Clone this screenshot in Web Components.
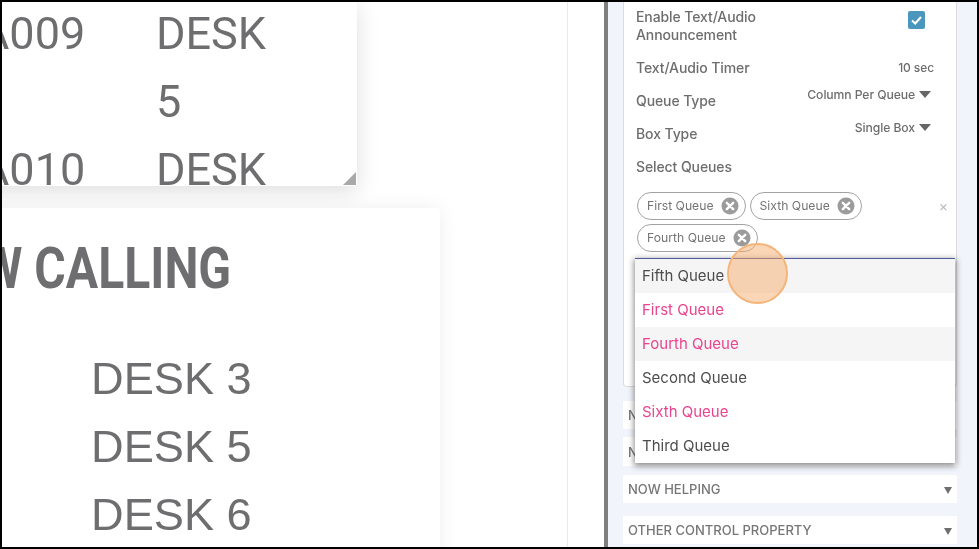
<!DOCTYPE html>
<html lang="en">
<head>
<meta charset="utf-8">
<title>Queue display settings</title>
<style>
    html, body { margin: 0; padding: 0; background: #fff; }
</style>
</head>
<body>
<app-frame>
    <ticket-card slot="canvas"></ticket-card>
    <calling-card slot="canvas"></calling-card>
    <settings-panel slot="side"></settings-panel>
</app-frame>

<script>
class AppFrame extends HTMLElement {
    constructor() {
        super()
        this.attachShadow({ mode: 'open' }).innerHTML = /*html*/ `
            <style>
                :host {
                    display: flex;
                    box-sizing: border-box;
                    width: 979px;
                    height: 549px;
                    border: 2px solid #000;
                    overflow: hidden;
                    background: #fff;
                }
                .work {
                    flex: 1;
                    min-width: 0;
                    padding-right: 36px;
                    filter: blur(0.3px);
                }
                .canvas {
                    position: relative;
                    height: 100%;
                    overflow: hidden;
                    border-right: 1px solid #e9e9e9;
                }
            </style>
            <div class="work"><div class="canvas"><slot name="canvas"></slot></div></div>
            <slot name="side"></slot>
        `
    }
}

class TicketCard extends HTMLElement {
    constructor() {
        super()
        this.attachShadow({ mode: 'open' }).innerHTML = /*html*/ `
            <style>
                :host {
                    position: absolute;
                    left: -60px;
                    top: -2px;
                    box-sizing: border-box;
                    width: 415px;
                    height: 186px;
                    padding-left: 38px;
                    overflow: hidden;
                    background: #fff;
                    box-shadow: 0 6px 22px rgba(0, 0, 0, 0.13);
                    font: 45px/68px Roboto, sans-serif;
                    color: #6e6e70;
                }
                table { border-collapse: collapse; table-layout: fixed; width: 301px; }
                td { padding: 0; vertical-align: top; }
                .num { width: 176px; }
                .grip {
                    position: absolute;
                    right: 1px;
                    bottom: 1px;
                    width: 13px;
                    height: 13px;
                    background: #a9a9a9;
                    clip-path: polygon(100% 0, 100% 100%, 0 100%);
                }
            </style>
            <table>
                <tr><td class="num">A009</td><td>DESK 5</td></tr>
                <tr><td class="num">A010</td><td>DESK 6</td></tr>
            </table>
            <div class="grip"></div>
        `
    }
}

class CallingCard extends HTMLElement {
    constructor() {
        super()
        this.attachShadow({ mode: 'open' }).innerHTML = /*html*/ `
            <style>
                :host {
                    position: absolute;
                    left: -60px;
                    top: 206px;
                    box-sizing: border-box;
                    width: 498px;
                    height: 420px;
                    padding-left: 149px;
                    background: #fff;
                    border-radius: 4px;
                    box-shadow: 0 0 20px rgba(0, 0, 0, 0.07);
                    color: #6e6e70;
                }
                h2 {
                    margin: 0 0 0 -178px;
                    padding-top: 27px;
                    font: 700 57px/68px Roboto, sans-serif;
                    white-space: nowrap;
                    transform: scaleX(0.845);
                    transform-origin: left;
                }
                .desks {
                    margin-top: 42px;
                    font: 45.2px/68px "Liberation Sans", sans-serif;
                }
            </style>
            <h2>NOW CALLING</h2>
            <div class="desks">
                <div>DESK 3</div>
                <div>DESK 5</div>
                <div>DESK 6</div>
            </div>
        `
    }
}

class SettingRow extends HTMLElement {
    constructor() {
        super()
        this.attachShadow({ mode: 'open' }).innerHTML = /*html*/ `
            <style>
                :host {
                    display: flex;
                    justify-content: space-between;
                    align-items: center;
                    height: 33px;
                    font-size: 14px;
                    font-weight: 500;
                    letter-spacing: -0.1px;
                    line-height: 18px;
                    color: #6d6d6d;
                }
                .value {
                    display: flex;
                    align-items: center;
                    gap: 4px;
                    margin: -12px 3px 0 0;
                    font-size: 12.2px;
                }
                :host([plain]) .value { margin: 0; font-size: 12px; }
                .caret {
                    width: 0;
                    height: 0;
                    border: 6px solid transparent;
                    border-top: 7px solid #666;
                    border-bottom: 0;
                }
            </style>
            <slot></slot>
            <div class="value"><slot name="value"></slot></div>
        `
        if (this.hasAttribute('caret')) {
            const caret = document.createElement('div')
            caret.className = 'caret'
            this.shadowRoot.querySelector('.value').append(caret)
        }
    }
}

class QueueChip extends HTMLElement {
    constructor() {
        super()
        this.attachShadow({ mode: 'open' }).innerHTML = /*html*/ `
            <style>
                :host {
                    display: inline-flex;
                    align-items: center;
                    box-sizing: border-box;
                    height: 28px;
                    padding: 0 6px 1px 9px;
                    gap: 7px;
                    border: 1.5px solid #a3a3a3;
                    border-radius: 14px;
                    font-size: 12.2px;
                    color: #747474;
                }
                svg { display: block; }
            </style>
            <slot></slot>
            <svg width="18" height="18" viewBox="0 0 18 18">
                <circle cx="9" cy="9" r="8.5" fill="#9b9b9b"/>
                <path d="M5.8 5.8l6.4 6.4M12.2 5.8l-6.4 6.4" stroke="#fff" stroke-width="2.4" stroke-linecap="round"/>
            </svg>
        `
    }
}

class QueueOption extends HTMLElement {
    constructor() {
        super()
        this.attachShadow({ mode: 'open' }).innerHTML = /*html*/ `
            <style>
                :host {
                    display: flex;
                    align-items: center;
                    box-sizing: border-box;
                    height: 34px;
                    padding: 0 0 2px 7px;
                    font-size: 15px;
                    font-weight: 400;
                    color: #4d4d4d;
                    background: #fff;
                }
                :host([active]) { background: #f5f5f5; }
                :host([selected]) { color: #e8458f; }
            </style>
            <slot></slot>
        `
    }
}

class QueueSelect extends HTMLElement {
    constructor() {
        super()
        this.attachShadow({ mode: 'open' }).innerHTML = /*html*/ `
            <style>
                :host {
                    display: block;
                    position: relative;
                    box-sizing: border-box;
                    margin: 9px -21px 0 0;
                    padding: 0 0 6px 1px;
                }
                .chips {
                    display: flex;
                    flex-wrap: wrap;
                    gap: 4px 4px;
                    width: 290px;
                }
                .clear {
                    position: absolute;
                    right: 7px;
                    top: 5px;
                    font-size: 14px;
                    line-height: 18px;
                    color: #b9b9b9;
                }
                .menu {
                    position: absolute;
                    left: -1px;
                    right: 0;
                    top: 100%;
                    z-index: 2;
                    background: #fff;
                    border-top: 1.5px solid #4f5b9c;
                    box-shadow: 0 2px 6px 1px rgba(0, 0, 0, 0.45);
                }
                .pointer {
                    position: absolute;
                    left: 91px;
                    top: 51px;
                    z-index: 3;
                    box-sizing: border-box;
                    width: 61px;
                    height: 61px;
                    border: 2px solid #f5b47a;
                    border-radius: 50%;
                    background: rgba(245, 170, 105, 0.48);
                }
            </style>
            <div class="chips"><slot name="chip"></slot></div>
            <div class="clear">×</div>
            <div class="menu"><slot></slot></div>
            <div class="pointer"></div>
        `
    }
}

class AccordionRow extends HTMLElement {
    constructor() {
        super()
        this.attachShadow({ mode: 'open' }).innerHTML = /*html*/ `
            <style>
                :host {
                    display: flex;
                    justify-content: space-between;
                    align-items: center;
                    height: 28px;
                    padding: 0 5px;
                    background: #fff;
                    font-size: 13px;
                    font-weight: 500;
                    color: #767676;
                }
                .caret {
                    width: 0;
                    height: 0;
                    margin-top: 3px;
                    border: 4.5px solid transparent;
                    border-top: 7px solid #6f6f6f;
                    border-bottom: 0;
                }
            </style>
            <slot></slot>
            <div class="caret"></div>
        `
    }
}

class SettingsPanel extends HTMLElement {
    constructor() {
        super()
        this.attachShadow({ mode: 'open' }).innerHTML = /*html*/ `
            <style>
                :host {
                    display: block;
                    box-sizing: border-box;
                    flex: none;
                    width: 373px;
                    height: 100%;
                    padding: 0 20px 0 15px;
                    border-left: 4px solid #7f7f7f;
                    background: #f2f4fb;
                    font-family: Inter, "Liberation Sans", sans-serif;
                    filter: blur(0.35px);
                }
                .card {
                    box-sizing: border-box;
                    height: 385px;
                    padding: 6px 22px 0 12px;
                    background: #fff;
                    border: 1px solid #dcdcdc;
                    border-top: 0;
                    border-radius: 0 0 4px 4px;
                }
                .enable {
                    display: flex;
                    justify-content: space-between;
                    align-items: flex-start;
                    height: 43px;
                    font-size: 14px;
                    font-weight: 500;
                    letter-spacing: -0.1px;
                    line-height: 18px;
                    color: #6d6d6d;
                }
                .check {
                    width: 17px;
                    height: 18px;
                    margin: 3px 9px 0 0;
                    border-radius: 2px;
                    background: #4b96bd;
                }
                .check svg { display: block; }
                .rows { padding-top: 14px; }
                .rows accordion-row { margin-bottom: 8px; }
                .rows accordion-row:nth-child(2) { height: 29px; margin-bottom: 9px; }
                .rows accordion-row:nth-child(3) { margin-bottom: 13px; }
            </style>
            <div class="card">
                <div class="enable">
                    <div>Enable Text/Audio<br>Announcement</div>
                    <div class="check">
                        <svg width="17" height="18" viewBox="0 0 17 18"><path d="M4 9.5l3.2 3L13 6" fill="none" stroke="#fff" stroke-width="2"/></svg>
                    </div>
                </div>
                <setting-row plain>Text/Audio Timer<span slot="value">10 sec</span></setting-row>
                <setting-row caret>Queue Type<span slot="value">Column Per Queue</span></setting-row>
                <setting-row caret>Box Type<span slot="value">Single Box</span></setting-row>
                <setting-row>Select Queues</setting-row>
                <queue-select>
                    <queue-chip slot="chip">First Queue</queue-chip>
                    <queue-chip slot="chip">Sixth Queue</queue-chip>
                    <queue-chip slot="chip">Fourth Queue</queue-chip>
                    <queue-option active>Fifth Queue</queue-option>
                    <queue-option selected>First Queue</queue-option>
                    <queue-option selected active>Fourth Queue</queue-option>
                    <queue-option>Second Queue</queue-option>
                    <queue-option selected>Sixth Queue</queue-option>
                    <queue-option>Third Queue</queue-option>
                </queue-select>
            </div>
            <div class="rows">
                <accordion-row>NOW SERVING</accordion-row>
                <accordion-row>NOW CALLING</accordion-row>
                <accordion-row>NOW HELPING</accordion-row>
                <accordion-row>OTHER CONTROL PROPERTY</accordion-row>
            </div>
        `
    }
}

customElements.define('app-frame', AppFrame)
customElements.define('ticket-card', TicketCard)
customElements.define('calling-card', CallingCard)
customElements.define('setting-row', SettingRow)
customElements.define('queue-chip', QueueChip)
customElements.define('queue-option', QueueOption)
customElements.define('queue-select', QueueSelect)
customElements.define('accordion-row', AccordionRow)
customElements.define('settings-panel', SettingsPanel)
</script>
</body>
</html>
